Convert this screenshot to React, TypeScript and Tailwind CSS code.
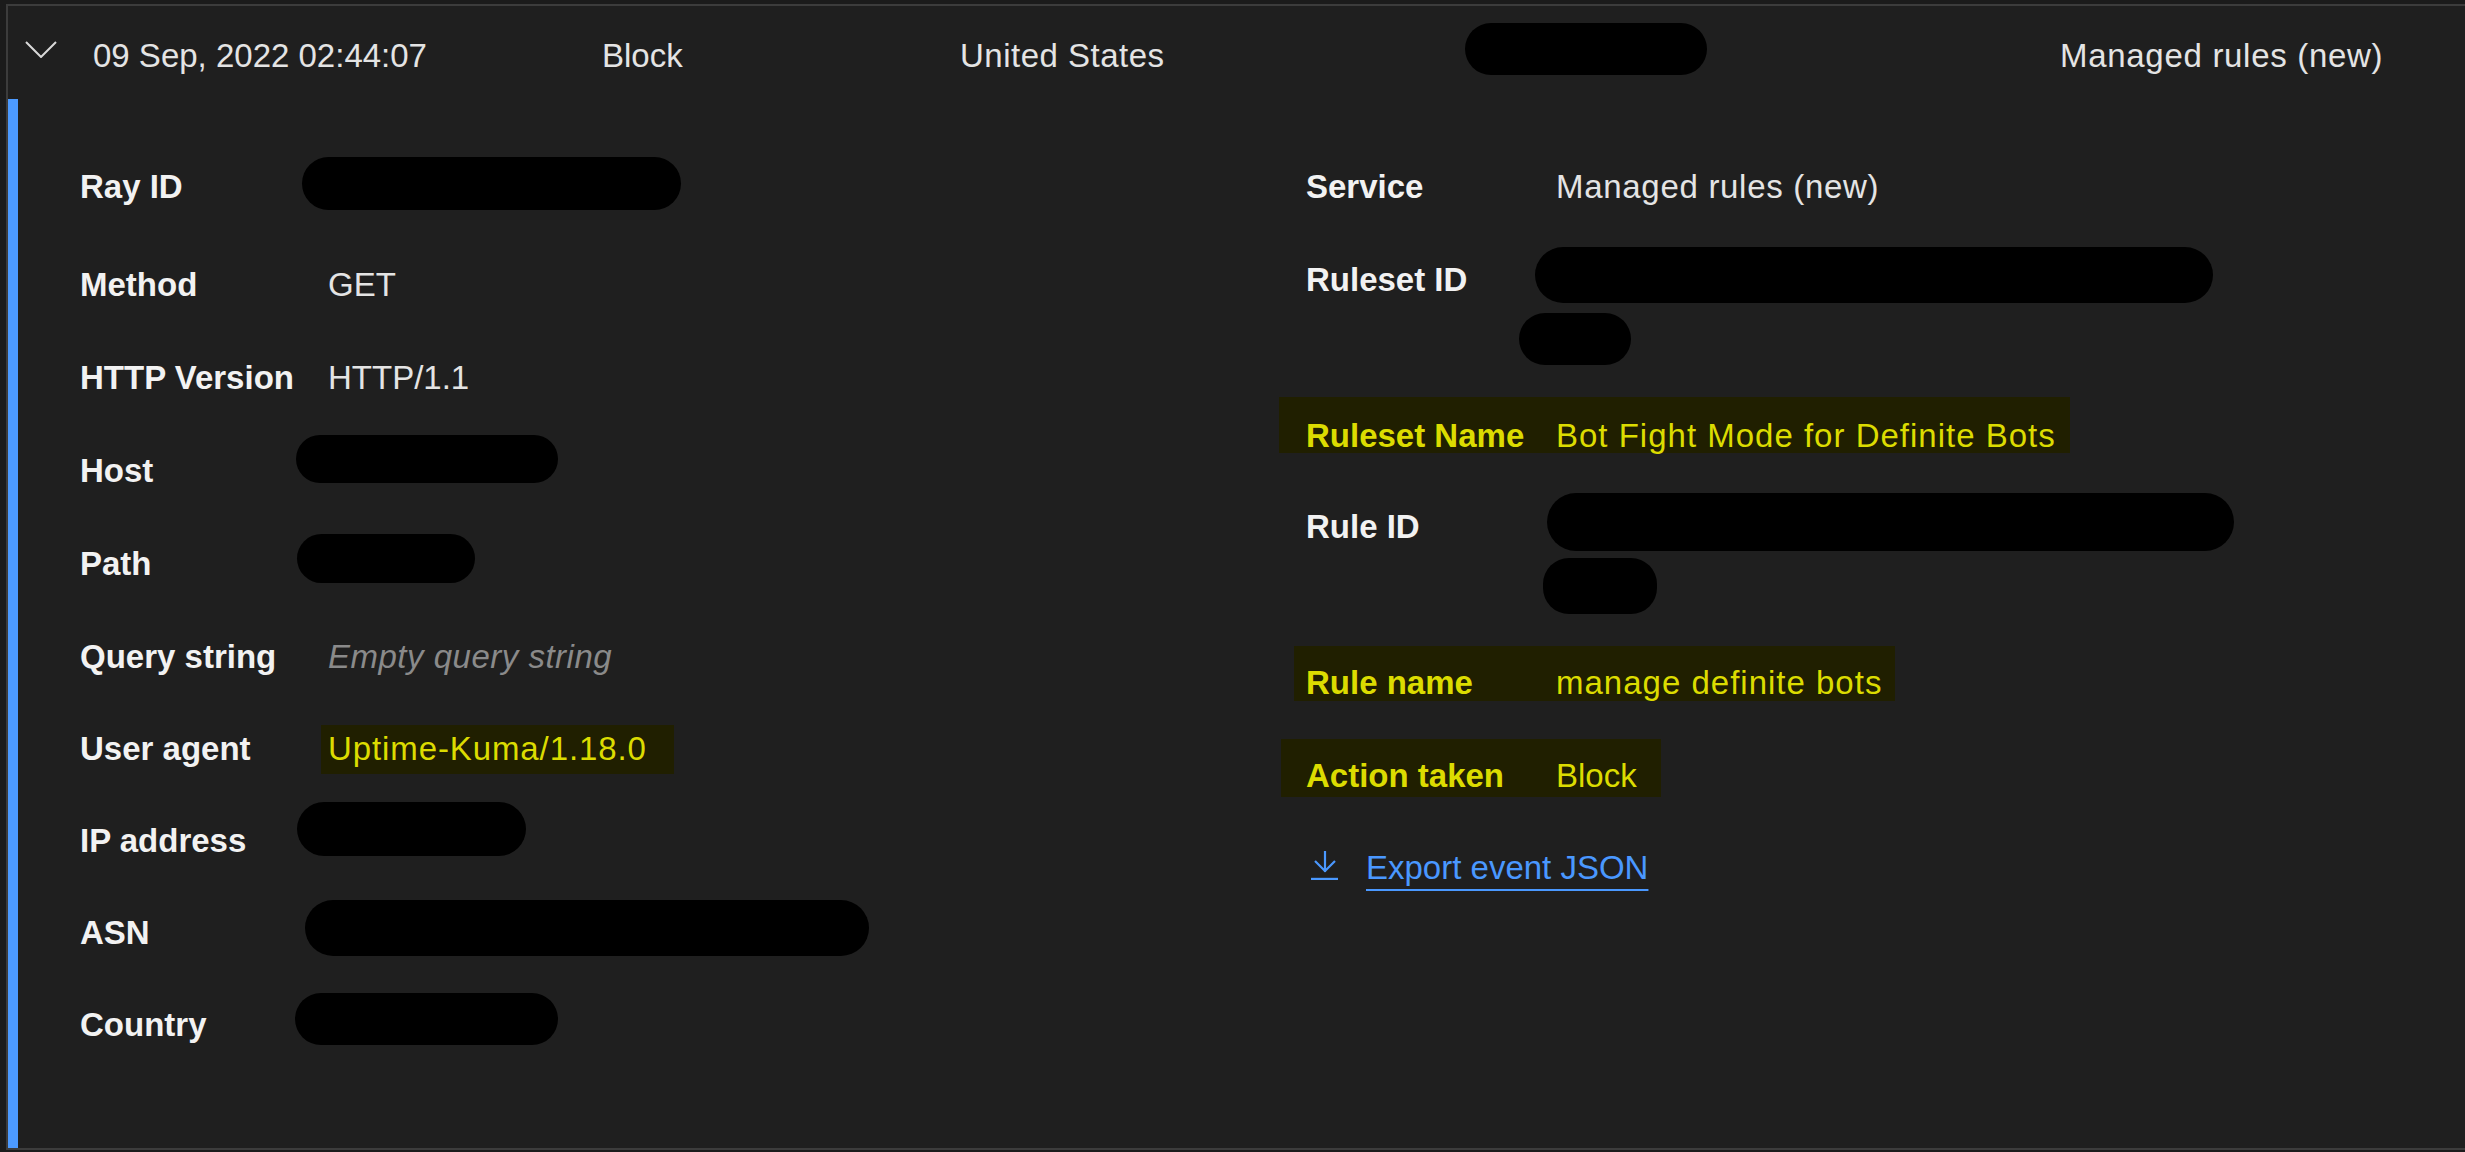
import React from "react";

const Chevron = () => (
  <svg width="32" height="17" viewBox="0 0 32 17" fill="none" className="mt-[8px] ml-[17px]">
    <path d="M1 1L16 16L31 1" stroke="#d8d8d8" strokeWidth="2" />
  </svg>
);

const DownloadIcon = () => (
  <svg width="30" height="30" viewBox="0 0 30 30" fill="none" className="mt-[5px] ml-[4px]">
    <path d="M15 1V22M5 11L15 21L25 11" stroke="#4a98ff" strokeWidth="2.2" />
    <path d="M1 29H28" stroke="#4a98ff" strokeWidth="2.4" />
  </svg>
);

const Label = ({ children }: { children: React.ReactNode }) => (
  <span className="font-bold text-[#f2f2f2]">{children}</span>
);

export default function App() {
  return (
    <div className="h-[1152px] bg-[#1b1b1b] pt-[4px] pl-[6px] overflow-hidden font-['Liberation_Sans',Arial,sans-serif] text-[33px] leading-[46px] text-[#e4e4e4]">
      <div className="h-[1146px] border-t-2 border-l-2 border-b-2 border-[#3c3c3c] bg-[#1f1f1f] flex flex-col">
        {/* summary row */}
        <div className="h-[93px] pt-[27px] grid grid-cols-[85px_509px_358px_505px_595px_1fr] items-start">
          <Chevron />
          <span>09 Sep, 2022 02:44:07</span>
          <span>Block</span>
          <span className="tracking-[0.5px]">United States</span>
          <span className="block w-[242px] h-[52px] -mt-[10px] bg-black rounded-full" />
          <span className="tracking-[0.7px]">Managed rules (new)</span>
        </div>

        {/* expanded details */}
        <div className="flex-1 border-l-[10px] border-[#4c9aff] pl-[62px] pt-[65px] flex">
          {/* left column */}
          <div className="w-[1226px] flex flex-col">
            <div className="h-[98px] grid grid-cols-[248px_1fr]">
              <Label>Ray ID</Label>
              <span className="block w-[379px] h-[53px] -ml-[26px] -mt-[7px] bg-black rounded-full" />
            </div>
            <div className="h-[93px] grid grid-cols-[248px_1fr]">
              <Label>Method</Label>
              <span>GET</span>
            </div>
            <div className="h-[93px] grid grid-cols-[248px_1fr]">
              <Label>HTTP Version</Label>
              <span>HTTP/1.1</span>
            </div>
            <div className="h-[93px] grid grid-cols-[248px_1fr]">
              <Label>Host</Label>
              <span className="block w-[262px] h-[48px] -ml-[32px] -mt-[13px] bg-black rounded-full" />
            </div>
            <div className="h-[93px] grid grid-cols-[248px_1fr]">
              <Label>Path</Label>
              <span className="block w-[178px] h-[49px] -ml-[31px] -mt-[7px] bg-black rounded-full" />
            </div>
            <div className="h-[92px] grid grid-cols-[248px_1fr]">
              <Label>Query string</Label>
              <span className="italic text-[#8a8a8a] tracking-[0.5px]">Empty query string</span>
            </div>
            <div className="h-[92px] grid grid-cols-[248px_1fr]">
              <Label>User agent</Label>
              <span className="block w-[353px] h-[49px] -ml-[7px] pl-[7px] -mt-[1px] pt-[1px] bg-[#201f00] text-[#dcdc00] tracking-[0.9px]">
                Uptime-Kuma/1.18.0
              </span>
            </div>
            <div className="h-[92px] grid grid-cols-[248px_1fr]">
              <Label>IP address</Label>
              <span className="block w-[229px] h-[54px] -ml-[31px] -mt-[16px] bg-black rounded-full" />
            </div>
            <div className="h-[92px] grid grid-cols-[248px_1fr]">
              <Label>ASN</Label>
              <span className="block w-[564px] h-[56px] -ml-[23px] -mt-[10px] bg-black rounded-full" />
            </div>
            <div className="h-[92px] grid grid-cols-[248px_1fr]">
              <Label>Country</Label>
              <span className="block w-[263px] h-[52px] -ml-[33px] -mt-[9px] bg-black rounded-full" />
            </div>
          </div>

          {/* right column */}
          <div className="flex-1 flex flex-col">
            <div className="h-[93px] grid grid-cols-[250px_1fr]">
              <Label>Service</Label>
              <span className="tracking-[0.7px]">Managed rules (new)</span>
            </div>
            <div className="h-[156px] grid grid-cols-[250px_1fr]">
              <Label>Ruleset ID</Label>
              <div className="flex flex-col">
                <span className="block w-[678px] h-[56px] -ml-[21px] -mt-[10px] bg-black rounded-full" />
                <span className="block w-[112px] h-[52px] -ml-[37px] mt-[10px] bg-black rounded-full" />
              </div>
            </div>
            <div className="h-[91px]">
              <div className="w-[791px] h-[56px] -ml-[27px] pl-[27px] -mt-[16px] pt-[16px] bg-[#201f00] grid grid-cols-[250px_1fr] text-[#dcdc00]">
                <span className="font-bold">Ruleset Name</span>
                <span className="tracking-[1px]">Bot Fight Mode for Definite Bots</span>
              </div>
            </div>
            <div className="h-[156px] grid grid-cols-[250px_1fr]">
              <Label>Rule ID</Label>
              <div className="flex flex-col">
                <span className="block w-[687px] h-[58px] -ml-[9px] -mt-[11px] bg-black rounded-full" />
                <span className="block w-[114px] h-[56px] -ml-[13px] mt-[7px] bg-black rounded-[26px]" />
              </div>
            </div>
            <div className="h-[93px]">
              <div className="w-[601px] h-[55px] -ml-[12px] pl-[12px] -mt-[14px] pt-[14px] bg-[#201f00] grid grid-cols-[250px_1fr] text-[#dcdc00]">
                <span className="font-bold">Rule name</span>
                <span className="tracking-[1px]">manage definite bots</span>
              </div>
            </div>
            <div className="h-[92px]">
              <div className="w-[380px] h-[58px] -ml-[25px] pl-[25px] -mt-[14px] pt-[14px] bg-[#201f00] grid grid-cols-[250px_1fr] text-[#dcdc00]">
                <span className="font-bold">Action taken</span>
                <span>Block</span>
              </div>
            </div>
            <a href="#" className="flex items-start gap-[26px] text-[#4a98ff] w-fit">
              <DownloadIcon />
              <span className="underline decoration-2 underline-offset-[10px]">Export event JSON</span>
            </a>
          </div>
        </div>
      </div>
    </div>
  );
}
